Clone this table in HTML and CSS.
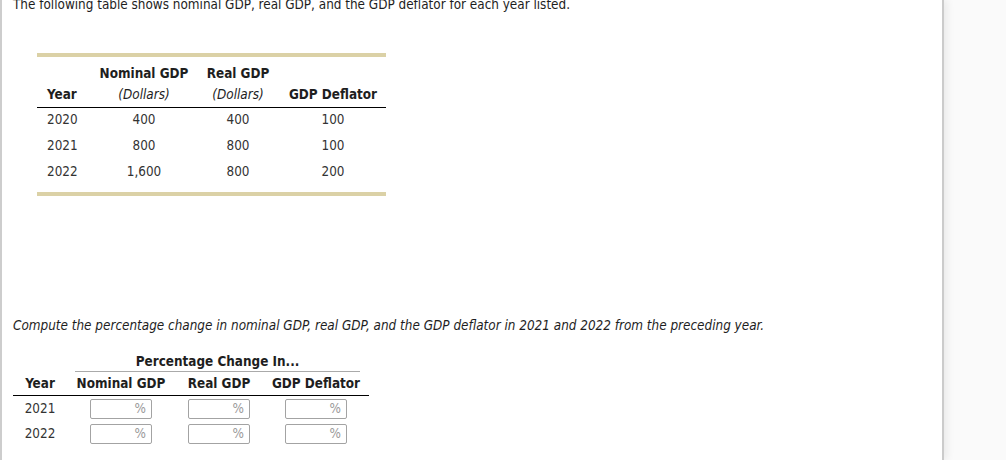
FILE: index.html
```html
<!DOCTYPE html>
<html lang="en">
<head>
<meta charset="utf-8">
<title>GDP deflator</title>
<link rel="stylesheet" href="styles.css">
</head>
<body>
<div class="panel">
  <p class="intro">The following table shows nominal GDP, real GDP, and the GDP deflator for each year listed.</p>

  <table class="data">
    <thead>
      <tr class="h1">
        <th class="c-year"></th>
        <th class="c-nom">Nominal GDP</th>
        <th class="c-real">Real GDP</th>
        <th class="c-def"></th>
      </tr>
      <tr class="h2">
        <th class="c-year left">Year</th>
        <th class="c-nom"><em>(Dollars)</em></th>
        <th class="c-real"><em>(Dollars)</em></th>
        <th class="c-def">GDP Deflator</th>
      </tr>
    </thead>
    <tbody>
      <tr><td class="left">2020</td><td>400</td><td>400</td><td>100</td></tr>
      <tr><td class="left">2021</td><td>800</td><td>800</td><td>100</td></tr>
      <tr class="last"><td class="left">2022</td><td>1,600</td><td>800</td><td>200</td></tr>
    </tbody>
  </table>

  <p class="prompt">Compute the percentage change in nominal GDP, real GDP, and the GDP deflator in 2021 and 2022 from the preceding year.</p>

  <table class="answers">
    <thead>
      <tr class="group">
        <th class="a-year"></th>
        <th colspan="3"><div class="group-label">Percentage Change In...</div></th>
      </tr>
      <tr class="cols">
        <th class="a-year">Year</th>
        <th class="a-nom">Nominal GDP</th>
        <th class="a-real">Real GDP</th>
        <th class="a-def">GDP Deflator</th>
      </tr>
    </thead>
    <tbody>
      <tr>
        <td>2021</td>
        <td><label class="box"><input type="text" aria-label="Nominal GDP 2021"><span class="unit">%</span></label></td>
        <td><label class="box"><input type="text" aria-label="Real GDP 2021"><span class="unit">%</span></label></td>
        <td><label class="box"><input type="text" aria-label="GDP Deflator 2021"><span class="unit">%</span></label></td>
      </tr>
      <tr>
        <td>2022</td>
        <td><label class="box"><input type="text" aria-label="Nominal GDP 2022"><span class="unit">%</span></label></td>
        <td><label class="box"><input type="text" aria-label="Real GDP 2022"><span class="unit">%</span></label></td>
        <td><label class="box"><input type="text" aria-label="GDP Deflator 2022"><span class="unit">%</span></label></td>
      </tr>
    </tbody>
  </table>
</div>
</body>
</html>
```

FILE: styles.css
```css
html, body {
  margin: 0;
  padding: 0;
}

body {
  background: #fafafa;
  font-family: "DejaVu Sans", Verdana, sans-serif;
  font-stretch: condensed;
  font-size: 13.4px;
  color: #1e1e1e;
  overflow: hidden;
}

.panel {
  display: flow-root;
  width: 929px;
  height: 460px;
  background: #fff;
  border-left: 2px solid #cdcdcd;
  border-right: 2px solid #cbcbcb;
  box-shadow: 3px 0 8px rgba(0, 0, 0, 0.07);
  padding-left: 11px;
  box-sizing: content-box;
}

.intro {
  margin: -3px 0 0;
  line-height: 16px;
}

/* top data table */
.data {
  margin: 40px 0 0 24px;
  border-collapse: collapse;
  border-top: 4px solid #dbd1a6;
  border-bottom: 4px solid #dbd1a6;
  line-height: 16px;
}

.data th,
.data td {
  padding: 0;
  text-align: center;
}

.data .c-year { width: 45px; }
.data .c-nom { width: 104px; }
.data .c-real { width: 84px; }
.data .c-def { width: 106px; }

.data .left {
  text-align: left;
  padding-left: 10px;
}

.data .h1 th {
  padding-top: 9px;
}

.data .h2 th {
  padding-top: 5px;
  padding-bottom: 4px;
  border-bottom: 1px solid #000;
}

.data em {
  font-weight: normal;
}

.data td {
  padding-top: 4px;
  padding-bottom: 6px;
  color: #333;
}

.data .last td {
  padding-bottom: 12px;
}

.prompt {
  margin: 122px 0 0;
  line-height: 16px;
  font-style: italic;
}

/* answer table */
.answers {
  margin-top: 20px;
  border-collapse: collapse;
  line-height: 16px;
}

.answers th,
.answers td {
  padding: 0;
  text-align: center;
}

.answers .a-year { width: 54px; }
.answers .a-nom { width: 108px; }
.answers .a-real { width: 88px; }
.answers .a-def { width: 106px; }

.group-label {
  margin: 0 9px 0 8px;
  padding-bottom: 1px;
  border-bottom: 1px solid #aaa;
}

.answers .cols th {
  padding-top: 4px;
  padding-bottom: 3px;
  border-bottom: 1px solid #000;
}

.answers td {
  padding-top: 3px;
  padding-bottom: 2px;
  color: #333;
}

.box {
  display: inline-flex;
  align-items: center;
  width: 62px;
  height: 20px;
  box-sizing: border-box;
  border: 1px solid #a3a3a3;
  border-radius: 2px;
  background: #fff;
  vertical-align: middle;
}

.box input {
  flex: 1;
  min-width: 0;
  border: 0;
  padding: 0;
  margin: 0;
  height: 16px;
  background: transparent;
  outline: none;
}

.unit {
  color: #9a9a9a;
  padding-right: 5px;
  line-height: 16px;
}
```
